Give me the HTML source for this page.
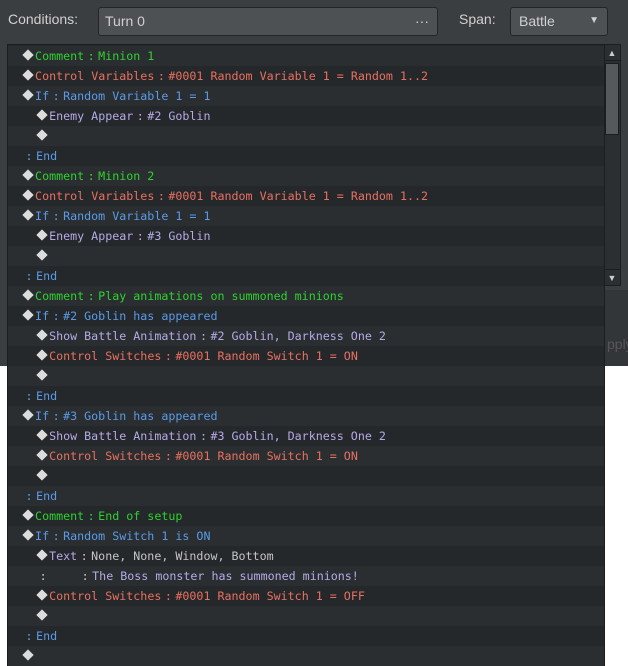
<!DOCTYPE html>
<html><head><meta charset="utf-8"><style>
*{margin:0;padding:0;box-sizing:border-box}
body{width:628px;height:666px;overflow:hidden;background:#fff;position:relative;font-family:"Liberation Sans",sans-serif}
.panel{position:absolute;left:0;top:0;width:628px;height:366px;background:#3b3e41}
.lbl{position:absolute;color:#d0d0d0;font-size:14px}
.box{position:absolute;background:#4d5154;border:1px solid #232527;border-radius:3px;color:#d0d0d0;font-size:14px;padding-left:6px;line-height:26px}
.list{position:absolute;left:7px;top:44px;width:598px;height:622px;background:#25282b;border:1px solid #1b1d1f;border-bottom:none;overflow:hidden;padding-top:1px}
.row{height:20px;line-height:20px;font-family:"DejaVu Sans Mono",monospace;font-size:11.67px;white-space:pre;color:#c8c8c8;position:relative}
.row:nth-child(odd){background:#2b2e31}
.d{display:inline-block;width:13px;height:20px;position:relative;vertical-align:top}
.d::before{content:"";position:absolute;left:2px;top:5px;width:8px;height:8px;background:#dcdcdc;transform:rotate(45deg)}
.c{display:inline-block;width:14px;text-align:center}
.g{color:#2fd02f}.r{color:#e8705f}.b{color:#5a9ae6}.p{color:#b4aae6}.w{color:#c4c4c4}
.sb{position:absolute;left:603px;top:44px;width:18px;height:242px;background:#2c2f32;border:1px solid #1b1d1f}
</style></head><body>
<div class="panel"></div>
<div class="lbl" style="left:8px;top:11px">Conditions:</div>
<div class="box" style="left:98px;top:7px;width:340px;height:29px">Turn 0<span style="position:absolute;right:8px;top:0">···</span></div>
<div class="lbl" style="left:459px;top:11px">Span:</div>
<div class="box" style="left:510px;top:7px;width:98px;height:29px;padding-left:8px">Battle<span style="position:absolute;right:8px;top:0;font-size:10px">▼</span></div>
<div class="sb"><div style="height:16px;border-bottom:1px solid #1b1d1f;color:#ccc;font-size:9px;text-align:center;line-height:16px">▲</div>
<div style="position:absolute;left:1px;top:18px;width:14px;height:72px;background:#55595c;border:1px solid #1b1d1f"></div>
<div style="position:absolute;left:0;bottom:0;width:16px;height:16px;border-top:1px solid #1b1d1f;color:#ccc;font-size:9px;text-align:center;line-height:16px">▼</div></div>
<div style="position:absolute;left:605px;top:290px;width:23px;height:76px;background:#333639"></div>
<div style="position:absolute;left:607px;top:336px;color:#555;font-size:14px">pply</div>
<div class="list">
<div class="row">  <span class="d"></span><span class="g">Comment<span class="c">:</span>Minion 1</span></div>
<div class="row">  <span class="d"></span><span class="r">Control Variables<span class="c">:</span>#0001 Random Variable 1 = Random 1..2</span></div>
<div class="row">  <span class="d"></span><span class="b">If<span class="c">:</span>Random Variable 1 = 1</span></div>
<div class="row">    <span class="d"></span><span class="p">Enemy Appear<span class="c">:</span>#2 Goblin</span></div>
<div class="row">    <span class="d"></span></div>
<div class="row">  <span class="b"><span class="c">:</span>End</span></div>
<div class="row">  <span class="d"></span><span class="g">Comment<span class="c">:</span>Minion 2</span></div>
<div class="row">  <span class="d"></span><span class="r">Control Variables<span class="c">:</span>#0001 Random Variable 1 = Random 1..2</span></div>
<div class="row">  <span class="d"></span><span class="b">If<span class="c">:</span>Random Variable 1 = 1</span></div>
<div class="row">    <span class="d"></span><span class="p">Enemy Appear<span class="c">:</span>#3 Goblin</span></div>
<div class="row">    <span class="d"></span></div>
<div class="row">  <span class="b"><span class="c">:</span>End</span></div>
<div class="row">  <span class="d"></span><span class="g">Comment<span class="c">:</span>Play animations on summoned minions</span></div>
<div class="row">  <span class="d"></span><span class="b">If<span class="c">:</span>#2 Goblin has appeared</span></div>
<div class="row">    <span class="d"></span><span class="p">Show Battle Animation<span class="c">:</span>#2 Goblin, Darkness One 2</span></div>
<div class="row">    <span class="d"></span><span class="r">Control Switches<span class="c">:</span>#0001 Random Switch 1 = ON</span></div>
<div class="row">    <span class="d"></span></div>
<div class="row">  <span class="b"><span class="c">:</span>End</span></div>
<div class="row">  <span class="d"></span><span class="b">If<span class="c">:</span>#3 Goblin has appeared</span></div>
<div class="row">    <span class="d"></span><span class="p">Show Battle Animation<span class="c">:</span>#3 Goblin, Darkness One 2</span></div>
<div class="row">    <span class="d"></span><span class="r">Control Switches<span class="c">:</span>#0001 Random Switch 1 = ON</span></div>
<div class="row">    <span class="d"></span></div>
<div class="row">  <span class="b"><span class="c">:</span>End</span></div>
<div class="row">  <span class="d"></span><span class="g">Comment<span class="c">:</span>End of setup</span></div>
<div class="row">  <span class="d"></span><span class="b">If<span class="c">:</span>Random Switch 1 is ON</span></div>
<div class="row">    <span class="d"></span><span class="p">Text</span><span class="w"><span class="c">:</span>None, None, Window, Bottom</span></div>
<div class="row">    <span class="w"><span class="c">:</span>    <span class="c">:</span></span><span class="p">The Boss monster has summoned minions!</span></div>
<div class="row">    <span class="d"></span><span class="r">Control Switches<span class="c">:</span>#0001 Random Switch 1 = OFF</span></div>
<div class="row">    <span class="d"></span></div>
<div class="row">  <span class="b"><span class="c">:</span>End</span></div>
<div class="row">  <span class="d"></span></div>
</div>
</body></html>
